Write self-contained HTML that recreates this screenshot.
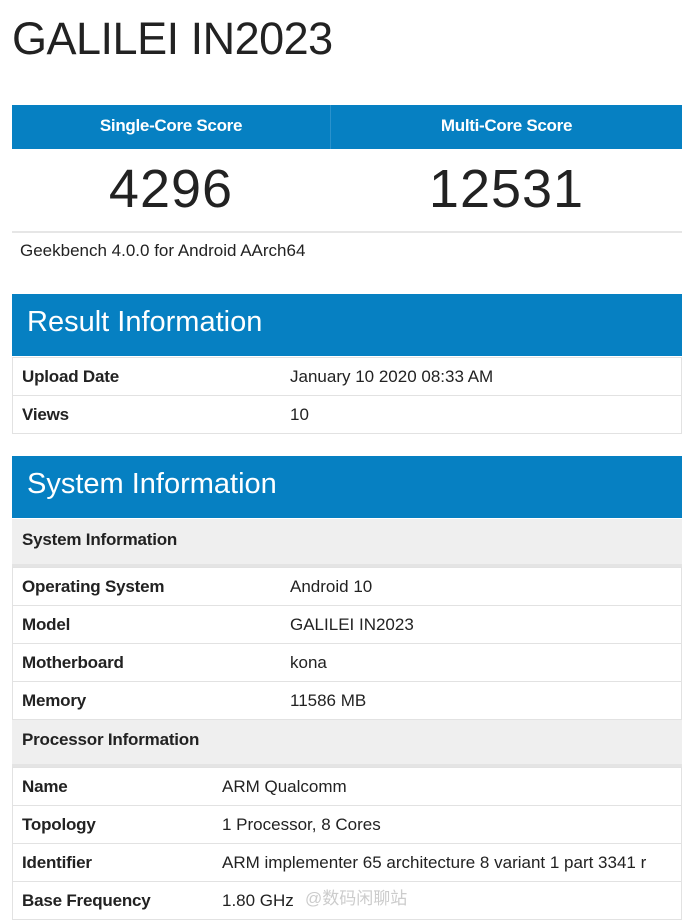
<!DOCTYPE html>
<html><head><style>
body{margin:0;background:#fff;width:690px;height:911px;overflow:hidden;font-family:"Liberation Sans",sans-serif;color:#222;}
.abs{position:absolute;}
h1{position:absolute;left:12px;top:13px;margin:0;font-weight:normal;font-size:45px;letter-spacing:-0.5px;color:#222;}
.blue{background:#0680c2;color:#fff;}
.row{position:absolute;box-sizing:border-box;left:12px;width:670px;height:39px;border:1px solid #e2e2e2;background:#fff;}
.row span{position:absolute;top:9px;font-size:17px;}
.k{left:9px;font-weight:bold;letter-spacing:-0.2px;}
.sub{position:absolute;left:12px;width:670px;background:#efefef;border-bottom:3px solid #e4e4e4;}
.sub span{position:absolute;left:10px;font-size:17px;font-weight:bold;letter-spacing:-0.2px;}
</style></head><body>
<h1>GALILEI IN2023</h1>
<div class="abs blue" style="left:12px;top:105px;width:670px;height:44px;"></div>
<div class="abs" style="left:330px;top:105px;width:1px;height:44px;background:#2a92cc"></div>
<div class="abs" style="left:12px;top:116px;width:318px;text-align:center;color:#fff;font-weight:bold;font-size:17px;letter-spacing:-0.3px">Single-Core Score</div>
<div class="abs" style="left:331px;top:116px;width:351px;text-align:center;color:#fff;font-weight:bold;font-size:17px;letter-spacing:-0.3px">Multi-Core Score</div>
<div class="abs" style="left:12px;top:158px;width:318px;text-align:center;font-size:54px;letter-spacing:1px">4296</div>
<div class="abs" style="left:331px;top:158px;width:351px;text-align:center;font-size:54px;letter-spacing:1px">12531</div>
<div class="abs" style="left:12px;top:231px;width:670px;height:2px;background:#e6e6e6"></div>
<div class="abs" style="left:20px;top:241px;font-size:17px;">Geekbench 4.0.0 for Android AArch64</div>

<div class="abs blue" style="left:12px;top:294px;width:670px;height:62px;"></div>
<div class="abs" style="left:27px;top:306px;font-size:29px;color:#fff">Result Information</div>
<div class="row" style="top:357px"><span class="k">Upload Date</span><span style="left:277px">January 10 2020 08:33 AM</span></div>
<div class="row" style="top:395px"><span class="k">Views</span><span style="left:277px">10</span></div>

<div class="abs blue" style="left:12px;top:456px;width:670px;height:62px;"></div>
<div class="abs" style="left:27px;top:468px;font-size:29px;color:#fff">System Information</div>
<div class="sub" style="top:519px;height:45px"><span style="top:11px">System Information</span></div>
<div class="row" style="top:567px"><span class="k">Operating System</span><span style="left:277px">Android 10</span></div>
<div class="row" style="top:605px"><span class="k">Model</span><span style="left:277px">GALILEI IN2023</span></div>
<div class="row" style="top:643px"><span class="k">Motherboard</span><span style="left:277px">kona</span></div>
<div class="row" style="top:681px"><span class="k">Memory</span><span style="left:277px">11586 MB</span></div>
<div class="sub" style="top:720px;height:44px"><span style="top:10px">Processor Information</span></div>
<div class="row" style="top:767px"><span class="k">Name</span><span style="left:209px">ARM Qualcomm</span></div>
<div class="row" style="top:805px"><span class="k">Topology</span><span style="left:209px">1 Processor, 8 Cores</span></div>
<div class="row" style="top:843px;overflow:hidden"><span class="k">Identifier</span><span style="left:209px;white-space:nowrap">ARM implementer 65 architecture 8 variant 1 part 3341 r</span></div>
<div class="row" style="top:881px"><span class="k">Base Frequency</span><span style="left:209px">1.80 GHz</span></div>
<div class="abs" style="left:305px;top:884px;font-size:17px;color:#ccc;font-family:'Liberation Sans','Noto Sans CJK SC',sans-serif">@数码闲聊站</div>
</body></html>
